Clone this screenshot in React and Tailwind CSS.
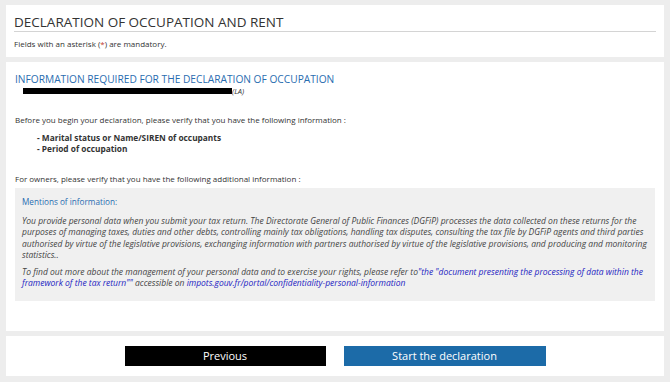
import React from 'react';

const App = () => {
  return (
    <div className="min-h-screen bg-[#ededed] px-[6px] pt-[5px] pb-[6px] text-[#333]" style={{ fontFamily: '"Open Sans", "Liberation Sans", sans-serif' }}>
      {/* Header card */}
      <div className="bg-white px-[8px] pt-[10px] h-[52px]">
        <h1 className="text-[13.5px] leading-[14px] text-[#333] pb-[2px] border-b border-[#d4d4d4]">
          DECLARATION OF OCCUPATION AND RENT
        </h1>
        <p className="text-[8px] leading-[10px] mt-[7px]">
          Fields with an asterisk (<span className="text-[#c0392b]">*</span>) are mandatory.
        </p>
      </div>

      {/* Main card */}
      <div className="bg-white mt-[5px] px-[9px] pt-[11px] h-[269px]">
        <h2 className="text-[10.2px] leading-[12px] text-[#2a6db0]">
          INFORMATION REQUIRED FOR THE DECLARATION OF OCCUPATION
        </h2>
        <div className="flex items-center ml-[8px] mt-[2px] h-[8px]">
          <div className="w-[209px] h-[6px] bg-black"></div>
          <span className="text-[7.5px] italic leading-[8px]">(LA)</span>
        </div>

        <p className="text-[8px] leading-[11px] mt-[19px]">
          Before you begin your declaration, please verify that you have the following information :
        </p>
        <ul className="text-[8.3px] leading-[11px] font-bold ml-[22px] mt-[7px]">
          <li>- Marital status or Name/SIREN of occupants</li>
          <li>- Period of occupation</li>
        </ul>
        <p className="text-[8px] leading-[11px] mt-[19px]">
          For owners, please verify that you have the following additional information :
        </p>

        <div className="bg-[#f0f0f0] mt-[4px] px-[7px] pt-[8px] h-[113px]">
          <h3 className="text-[8.2px] leading-[11px] text-[#2a6db0]">Mentions of information:</h3>
          <p className="text-[8.5px] leading-[11.3px] italic text-[#444] mt-[8px]">
            You provide personal data when you submit your tax return. The Directorate General of Public Finances (DGFiP) processes the data collected on these returns for the purposes of managing taxes, duties and other debts, controlling mainly tax obligations, handling tax disputes, consulting the tax file by DGFiP agents and third parties authorised by virtue of the legislative provisions, exchanging information with partners authorised by virtue of the legislative provisions, and producing and monitoring statistics..
          </p>
          <p className="text-[8.5px] leading-[11.3px] italic text-[#444] mt-[6px]">
            To find out more about the management of your personal data and to exercise your rights, please refer to<span className="text-[#2323c2]">"the "document presenting the processing of data within the framework of the tax return""</span>{' '}
            accessible on <span className="text-[#2323c2]">impots.gouv.fr/portal/confidentiality-personal-information</span>
          </p>
        </div>
      </div>

      {/* Footer card */}
      <div className="bg-white mt-[5px] h-[40px] flex items-center justify-center gap-[18px] pl-[1px] pr-[1px]">
        <button className="w-[201px] h-[20px] bg-black text-white text-[11px] leading-[20px]">
          Previous
        </button>
        <button className="w-[202px] h-[20px] bg-[#1c6ba8] text-white text-[11px] leading-[20px]">
          Start the declaration
        </button>
      </div>
    </div>
  );
};

export default App;
